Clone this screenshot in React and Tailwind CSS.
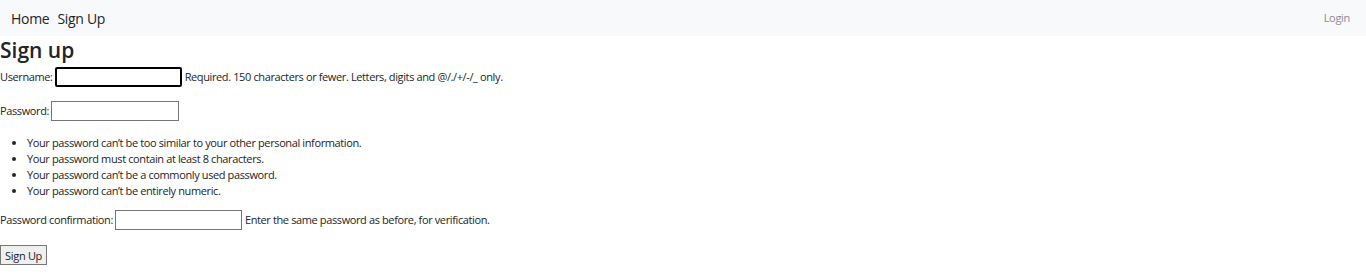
export default function App() {
  const rules = [
    "Your password can\u2019t be too similar to your other personal information.",
    "Your password must contain at least 8 characters.",
    "Your password can\u2019t be a commonly used password.",
    "Your password can\u2019t be entirely numeric.",
  ];

  return (
    <div className="min-h-[278px] bg-white text-[#212529] font-['Open_Sans',sans-serif]">
      <nav className="flex h-9 items-center justify-between bg-[#f8f9fa] pl-[11px] pr-[16px]">
        <div className="flex items-center gap-[8px] text-[14px] tracking-[-0.3px]">
          <a href="#" className="text-[#212529]">Home</a>
          <a href="#" className="text-[#212529]">Sign Up</a>
        </div>
        <a href="#" className="text-[11px] tracking-[-0.3px] text-[#8c8c8c]">Login</a>
      </nav>

      <h2 className="text-[21px] font-semibold leading-[28px]">Sign up</h2>

      <form className="text-[11px] leading-[16px] tracking-[-0.38px]">
        <p className="mt-[3px] flex items-center gap-[2px]">
          <label>Username:</label>
          <input type="text" className="h-5 w-[127px] rounded-[2px] border-2 border-black bg-white" />
          <span className="ml-[1px]">Required. 150 characters or fewer. Letters, digits and @/./+/-/_ only.</span>
        </p>

        <p className="mt-[14px] flex items-center gap-[2px]">
          <label>Password:</label>
          <input type="password" className="h-5 w-[128px] border border-[#767676] bg-white" />
        </p>

        <ul className="mt-[14px] list-disc pl-[27px]">
          {rules.map((r) => (
            <li key={r}>{r}</li>
          ))}
        </ul>

        <p className="mt-[11px] flex items-center gap-[2px]">
          <label>Password confirmation:</label>
          <input type="password" className="h-5 w-[127px] border border-[#767676] bg-white" />
          <span className="ml-[1px]">Enter the same password as before, for verification.</span>
        </p>

        <button type="button" className="mt-[15px] h-5 border border-[#767676] bg-[#efefef] px-[4px] text-[11px] leading-none tracking-[-0.3px]">
          Sign Up
        </button>
      </form>
    </div>
  );
}
